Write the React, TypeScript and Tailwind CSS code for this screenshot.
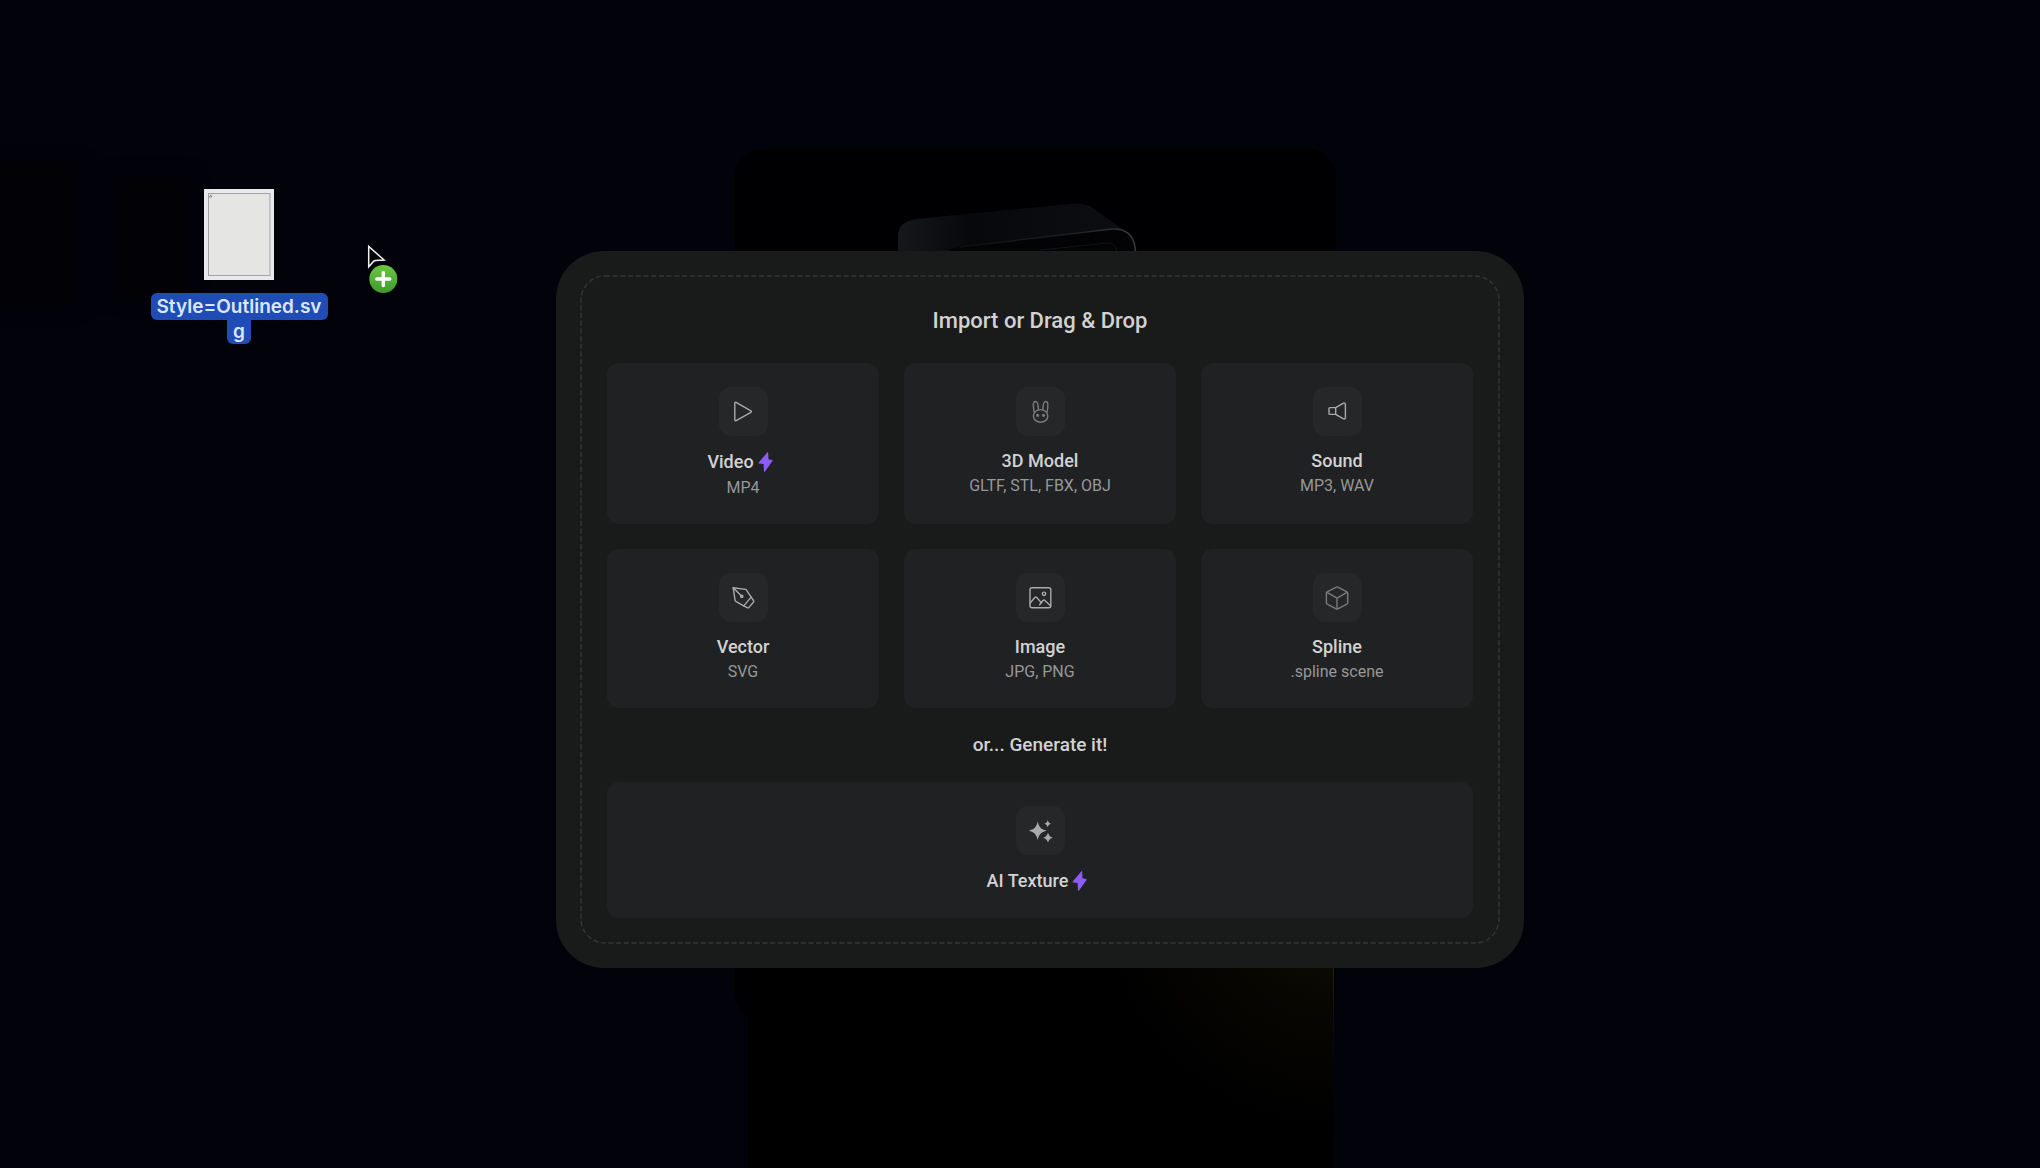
import React from 'react';

type ImportType = {
    title: string;
    formats: string;
    pro?: boolean;
    dim?: boolean;
    icon: React.ReactNode;
};

const IMPORT_TYPES: ImportType[] = [
    {
        title: 'Video',
        formats: 'MP4',
        pro: true,
        icon: <path d="M15.8 16.2c0-.8.7-1.1 1.3-.8l14.8 8.4c.7.4.7 1.1 0 1.5l-14.8 8.3c-.6.3-1.3 0-1.3-.7z" />,
    },
    {
        title: '3D Model',
        formats: 'GLTF, STL, FBX, OBJ',
        dim: true,
        icon: (
            <>
                <ellipse cx="24.6" cy="28.9" rx="7.2" ry="6.3" />
                <path d="M18.2 25.2c-.8-3.6-1-6.5-.8-8.6.3-2.8 3.6-2.9 4.2-.2.5 2 .8 4 .8 6.4M31 25.2c.8-3.6 1-6.5.8-8.6-.3-2.8-3.600-2.900-4.200-.2-.5 2-.8 4-.8 6.400" />
                <circle cx="21.7" cy="28.3" r=".9" fill="currentColor" />
                <circle cx="27.6" cy="28.3" r=".9" fill="currentColor" />
            </>
        ),
    },
    {
        title: 'Sound',
        formats: 'MP3, WAV',
        icon: (
            <path d="M22.7 20.6H17a1 1 0 0 0-1 1v4.8a1 1 0 0 0 1 1h5.7zl7.4-4.3c1.2-.7 2.300-.2 2.300 1v13.400c0 1.200-1.100 1.700-2.300 1l-7.400-4.300" />
        ),
    },
    {
        title: 'Vector',
        formats: 'SVG',
        icon: (
            <>
                <path d="M14.2 14.8l12.200 1.600c.5.100.8.300 1.100.7l4.700 7-7.500 8.800-7.900-4.500c-.4-.3-.6-.6-.7-1.100z" />
                <path d="M32.200 24.100l2.300 3.400c.4.600.3 1.200-.1 1.700l-4.500 5.200c-.5.500-1.100.6-1.700.3l-3.500-1.800M14.200 14.800l8.500 8.500" />
                <circle cx="22.8" cy="23.4" r="1.1" fill="currentColor" />
            </>
        ),
    },
    {
        title: 'Image',
        formats: 'JPG, PNG',
        icon: (
            <>
                <rect x="14" y="14.8" width="20.8" height="20" rx="2" />
                <circle cx="28" cy="20.8" r="1.7" />
                <path d="M14.2 30l4.600-5.500c.6-.6 1.300-.6 1.900 0l4.800 5.400M23.600 31.800l3.400-4.300c.6-.7 1.300-.7 1.900 0l5.700 5.200" />
            </>
        ),
    },
    {
        title: 'Spline',
        formats: '.spline scene',
        dim: true,
        icon: (
            <>
                <path d="M23.300 14.100a1.600 1.600 0 0 1 1.500 0l9.100 4.800c.5.300.8.700.8 1.300v9.600c0 .6-.3 1-.8 1.300l-9.100 4.800a1.600 1.600 0 0 1-1.500 0l-9.100-4.800c-.5-.3-.8-.7-.8-1.300v-9.600c0-.6.3-1 .8-1.300z" />
                <path d="M14 19.400l10 5.800 10-5.800M24 25.200v10.600" />
            </>
        ),
    },
];

const IconTile = ({ dim, children }: { dim?: boolean; children: React.ReactNode }) => (
    <span className="size-[49px] rounded-xl bg-[#262729]">
        <svg
            viewBox="0 0 49 49"
            fill="none"
            stroke="currentColor"
            strokeWidth="1.4"
            strokeLinecap="round"
            strokeLinejoin="round"
            className={dim ? 'size-full text-[#7a7b7b]' : 'size-full text-[#a9aaaa]'}
            aria-hidden="true"
        >
            {children}
        </svg>
    </span>
);

const Bolt = () => (
    <svg viewBox="1 0 25 26" className="h-[26px] w-[25px] text-[#8b5cf6]" fill="currentColor" aria-hidden="true">
        <path d="M14.200 3.400c.4-.6 1-.4 1 .3l.3 6.600 3.600.6c.6.100.8.500.4 1L12 22.400c-.5.600-1.100.4-1.100-.4l-.3-6.900-4.500-.5c-.6-.1-.8-.5-.4-1z" />
    </svg>
);

const Card = ({ title, formats, pro, dim, icon }: Omit<ImportType, 'formats'> & { formats?: string }) => (
    <button type="button" className="flex w-full flex-col items-center rounded-xl bg-[#202123] py-6">
        <IconTile dim={dim}>{icon}</IconTile>
        <span className="mt-[13px] flex items-center text-lg leading-6 font-medium text-[#d2d2d2]">
            {title}
            {pro && <Bolt />}
        </span>
        {formats && <span className="mt-px text-base leading-6 text-[#979898]">{formats}</span>}
    </button>
);

// Dimmed 3D scene that sits behind the dialog
const Scene = () => (
    <svg
        viewBox="0 0 2040 1168"
        preserveAspectRatio="xMidYMid slice"
        className="absolute inset-0 size-full"
        aria-hidden="true"
    >
        <defs>
            <radialGradient id="glow" gradientUnits="userSpaceOnUse" cx="1334" cy="900" r="240">
                <stop offset="0" stopColor="#111105" />
                <stop offset="0.5" stopColor="#060501" />
                <stop offset="1" stopColor="#000001" />
            </radialGradient>
            <linearGradient id="lid" x1="0" y1="0" x2="1" y2="0">
                <stop offset="0" stopColor="#16171a" />
                <stop offset="0.3" stopColor="#06080b" />
                <stop offset="1" stopColor="#0c0e11" />
            </linearGradient>
            <linearGradient id="edge" x1="0" y1="0" x2="0" y2="1">
                <stop offset="0" stopColor="#2a2410" />
                <stop offset="1" stopColor="#0a0903" stopOpacity="0" />
            </linearGradient>
            <linearGradient id="rim" x1="0" y1="0" x2="1" y2="0">
                <stop offset="0" stopColor="#0c0d10" />
                <stop offset="0.7" stopColor="#202225" />
                <stop offset="1" stopColor="#3a3c40" />
            </linearGradient>
            <filter id="soft" x="-30%" y="-30%" width="160%" height="160%">
                <feGaussianBlur stdDeviation="8" />
            </filter>
        </defs>
        <g opacity="0.45" filter="url(#soft)">
            <rect x="-20" y="160" width="105" height="150" fill="#010103" />
            <rect x="110" y="172" width="84" height="130" fill="#010103" />
        </g>
        <rect x="735" y="149" width="601" height="872" rx="28" fill="#000002" />
        <rect x="748" y="960" width="586" height="208" fill="url(#glow)" />
        <rect x="1333" y="960" width="1" height="120" fill="url(#edge)" />
        <path d="M898 262V236q0-14 18-17L1070 204q14-2 23 4l32 23q11 9 11 31z" fill="url(#lid)" />
        <path d="M944 262q0-13 16-15L1112 229q20-2 23 18l1 15z" fill="#030305" />
        <path d="M960 247L1112 229q20-1 23 18l1 8" fill="none" stroke="url(#rim)" strokeWidth="1.5" />
        <path d="M1040 250L1108 243q8 0 9 9" fill="none" stroke="#121317" />
    </svg>
);

const DraggedFile = () => (
    <div className="absolute top-[189px] left-[151px] flex w-[176px] flex-col items-center">
        <svg viewBox="0 0 70 91" className="h-[91px] w-[70px]" aria-hidden="true">
            <rect width="70" height="91" fill="#e9e8ec" />
            <rect x="4.5" y="4.5" width="61.5" height="82" fill="#e5e5e4" stroke="#a3a3a3" />
            <path d="M5 8h3l-2-2M5.500 8L8 5.500" fill="none" stroke="#777" strokeWidth=".7" />
        </svg>
        <p className="mt-[13px] flex flex-col items-center font-[Inter,sans-serif] text-[19px] font-semibold text-[#dbe6fb]">
            <span className="rounded-md bg-[#1f4db5] px-1.5 leading-[27px]">Style=Outlined.sv</span>
            <span className="rounded-b-md bg-[#1f4db5] px-1.5 leading-6">g</span>
        </p>
    </div>
);

const CopyCursor = () => (
    <svg viewBox="0 0 32 52" className="absolute top-[243px] left-[366px] h-[52px] w-8" aria-hidden="true">
        <defs>
            <linearGradient id="badge" x1="0" y1="0" x2="0" y2="1">
                <stop offset="0" stopColor="#6cc644" />
                <stop offset="1" stopColor="#3f9a2b" />
            </linearGradient>
        </defs>
        <path d="M2.700 3.500v20.200l5-5.500 1.600-.7 8.800-.5z" fill="#050508" stroke="#f2f2f2" strokeWidth="1.5" />
        <circle cx="17.3" cy="36" r="14" fill="url(#badge)" />
        <path d="M17.300 29.500v13M10.800 36h13" stroke="#fff" strokeWidth="3.4" strokeLinecap="round" />
    </svg>
);

export default function App() {
    return (
        <main className="relative flex min-h-screen items-center justify-center overflow-hidden bg-[#02020b] pt-[51px] pl-10 font-[Roboto,sans-serif]">
            <Scene />
            <section
                aria-labelledby="import-title"
                className="relative w-full max-w-[968px] rounded-[48px] bg-[#191b1a] p-6"
            >
                <div className="relative flex flex-col items-center gap-[25px] px-[27px] pt-7 pb-[26px]">
                    <div className="pointer-events-none absolute inset-px">
                        <svg className="size-full overflow-visible" aria-hidden="true">
                            <rect
                                width="100%"
                                height="100%"
                                rx="24"
                                fill="none"
                                stroke="#343635"
                                strokeWidth="1.4"
                                strokeDasharray="5 2.7"
                            />
                        </svg>
                    </div>
                    <h1 id="import-title" className="text-[22px] leading-[35px] font-medium text-[#d2d2d2]">
                        Import or Drag &amp; Drop
                    </h1>
                    <div className="grid w-full grid-cols-3 gap-[25px]">
                        {IMPORT_TYPES.map((type) => (
                            <Card key={type.title} {...type} />
                        ))}
                    </div>
                    <h2 className="text-[19px] leading-6 font-medium text-[#d2d2d2]">or... Generate it!</h2>
                    <Card
                        title="AI Texture"
                        pro
                        icon={
                            <g fill="currentColor" stroke="none">
                                <path d="M21.700 15.500c1.400 5.700 3.300 7.700 9 9.200-5.700 1.500-7.600 3.500-9 9.200-1.400-5.700-3.300-7.700-9-9.200 5.700-1.500 7.600-3.500 9-9.200z" />
                                <path d="M31.700 14.200c.6 2 1.400 2.900 3.400 3.500-2 .6-2.800 1.500-3.400 3.500-.6-2-1.400-2.900-3.400-3.500 2-.6 2.800-1.500 3.400-3.500z" />
                                <path d="M32 26.800c.9 2.900 2 4 4.800 4.900-2.800.9-3.900 2-4.800 4.900-.9-2.900-2-4-4.800-4.900 2.800-.9 3.900-2 4.800-4.900z" />
                            </g>
                        }
                    />
                </div>
            </section>
            <DraggedFile />
            <CopyCursor />
        </main>
    );
}
